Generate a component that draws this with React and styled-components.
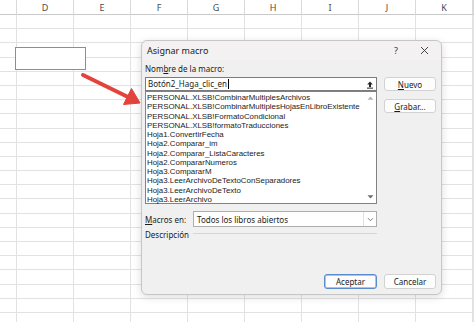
import React from 'react';
import styled, { createGlobalStyle } from 'styled-components';

const Global = createGlobalStyle`
  html, body { margin: 0; padding: 0; background: #ffffff; }
  body { font-family: "Noto Sans", "Liberation Sans", sans-serif; }
  #root { width: 474px; height: 322px; overflow: hidden; position: relative; }
`;

const Sheet = styled.div`
  display: grid;
  grid-template-columns: 17px repeat(8, 57px) 1fr;
  grid-template-rows: 15px repeat(22, 14.2px);
  width: 474px;
  height: 322px;
  background: #ffffff;
`;

const HeaderCell = styled.div`
  box-sizing: border-box;
  border-right: 1px solid #dadada;
  border-bottom: 1px solid #c9c9c9;
  display: flex;
  align-items: center;
  justify-content: center;
  font-size: 9px;
  color: #4a4a4a;
`;

const Cell = styled.div`
  box-sizing: border-box;
  border-right: 1px solid #e2e2e2;
  border-bottom: 1px solid #e2e2e2;
`;

const Shape = styled.div`
  position: absolute;
  left: 15px;
  top: 47px;
  width: 71px;
  height: 23px;
  box-sizing: border-box;
  border: 1px solid #8e8e8e;
  background: #ffffff;
`;

const ArrowSvg = styled.svg`
  position: absolute;
  left: 78px;
  top: 68px;
  overflow: visible;
`;

const Dialog = styled.div`
  position: absolute;
  left: 141px;
  top: 40px;
  width: 301px;
  height: 255px;
  box-sizing: border-box;
  background: #f0f0f0;
  border: 1px solid #c6c6c6;
  border-radius: 6px;
  box-shadow: 0 2px 8px rgba(0, 0, 0, 0.14);
  display: flex;
  flex-direction: column;
  font-family: "Noto Sans", "Liberation Sans", sans-serif;
  font-size: 8px;
  color: #1b1b1b;
`;

const TitleBar = styled.div`
  height: 19px;
  display: flex;
  align-items: center;
  padding-left: 5px;
  background: #f3f1f1;
  border-radius: 6px 6px 0 0;
`;

const Title = styled.div`
  flex: 1;
  font-size: 9px;
  color: #1b1b1b;
`;

const TitleButton = styled.div`
  width: ${p => p.$w}px;
  display: flex;
  align-items: center;
  justify-content: center;
  font-size: 9px;
  color: #333;
`;

const Body = styled.div`
  flex: 1;
  display: flex;
  flex-direction: column;
  padding: 3px 5px 5px 3px;
`;

const Main = styled.div`
  display: flex;
  gap: 7px;
`;

const LeftCol = styled.div`
  width: 232px;
  display: flex;
  flex-direction: column;
`;

const RightCol = styled.div`
  width: 52px;
  display: flex;
  flex-direction: column;
  gap: 8px;
  padding-top: 14px;
`;

const Label = styled.div`
  height: 11px;
  line-height: 11px;
  white-space: nowrap;
`;

const U = styled.span`
  text-decoration: underline;
  text-underline-offset: 1px;
`;

const InputBox = styled.div`
  margin-top: 3px;
  height: 14px;
  box-sizing: border-box;
  border: 1px solid #7b7b7b;
  background: #ffffff;
  display: flex;
  align-items: center;
  padding-left: 2px;
`;

const InputText = styled.div`
  flex: 1;
  display: flex;
  align-items: center;
  line-height: 12px;
`;

const Caret = styled.span`
  display: inline-block;
  width: 1px;
  height: 10px;
  background: #000;
  margin-left: 1px;
`;

const UploadBtn = styled.div`
  width: 12px;
  height: 12px;
  display: flex;
  align-items: center;
  justify-content: center;
`;

const ListBox = styled.div`
  height: 113px;
  box-sizing: border-box;
  border: 1px solid #828282;
  background: #ffffff;
  display: flex;
`;

const ListItems = styled.div`
  flex: 1;
  padding: 1px 0 0 1px;
  font-family: "Liberation Sans", "Noto Sans", sans-serif;
  font-size: 7.9px;
`;

const ListItem = styled.div`
  height: 9.25px;
  line-height: 9.25px;
  white-space: nowrap;
`;

const ScrollBar = styled.div`
  width: 11px;
  display: flex;
  flex-direction: column;
  justify-content: space-between;
  align-items: center;
  padding: 4px 0 4px;
`;

const MacrosRow = styled.div`
  margin-top: 7px;
  display: flex;
  align-items: center;
  height: 16px;
`;

const MacrosLabel = styled.div`
  width: 48px;
  white-space: nowrap;
`;

const Select = styled.div`
  flex: 1;
  height: 16px;
  box-sizing: border-box;
  border: 1px solid #adadad;
  background: #ffffff;
  display: flex;
  align-items: center;
  padding-left: 3px;
`;

const SelectText = styled.div`
  flex: 1;
`;

const SelectChevron = styled.div`
  width: 12px;
  height: 14px;
  border-left: 1px solid #e0e0e0;
  display: flex;
  align-items: center;
  justify-content: center;
`;

const DescRow = styled.div`
  margin-top: 2px;
  display: flex;
  align-items: center;
  gap: 4px;
  height: 11px;
`;

const DescLine = styled.div`
  flex: 1;
  height: 1px;
  background: #d6d6d6;
  margin-top: -2px;
`;

const Spacer = styled.div`
  flex: 1;
`;

const Footer = styled.div`
  display: flex;
  justify-content: flex-end;
  gap: 7px;
`;

const Button = styled.div`
  width: ${p => p.$w || 52}px;
  height: ${p => p.$h || 15}px;
  box-sizing: border-box;
  border: 1px solid ${p => (p.$default ? '#5a8ccb' : '#d2d2d2')};
  box-shadow: ${p => (p.$default ? 'inset 0 0 0 0.5px #5a8ccb' : 'none')};
  border-radius: 3px;
  background: #fdfdfd;
  display: flex;
  align-items: center;
  justify-content: center;
  font-size: 8px;
  color: #1b1b1b;
`;

const columns = ['', 'D', 'E', 'F', 'G', 'H', 'I', 'J', 'K', ''];

const items = [
  'PERSONAL.XLSB!CombinarMultiplesArchivos',
  'PERSONAL.XLSB!CombinarMultiplesHojasEnLibroExistente',
  'PERSONAL.XLSB!FormatoCondicional',
  'PERSONAL.XLSB!formatoTraducciones',
  'Hoja1.ConvertirFecha',
  'Hoja2.Comparar_im',
  'Hoja2.Comparar_ListaCaracteres',
  'Hoja2.CompararNumeros',
  'Hoja3.CompararM',
  'Hoja3.LeerArchivoDeTextoConSeparadores',
  'Hoja3.LeerArchivoDeTexto',
  'Hoja3.LeerArchivo',
];

export default function App() {
  const cells = [];
  for (let r = 0; r < 22; r++) {
    for (let c = 0; c < columns.length; c++) {
      cells.push(<Cell key={`${r}-${c}`} />);
    }
  }
  return (
    <>
      <Global />
      <Sheet>
        {columns.map((c, i) => (
          <HeaderCell key={i}>{c}</HeaderCell>
        ))}
        {cells}
      </Sheet>
      <Shape />
      <ArrowSvg width="66" height="40" viewBox="0 0 66 40">
        <line x1="5" y1="7" x2="50" y2="29" stroke="#e4433b" strokeWidth="4" strokeLinecap="round" />
        <polygon points="62,35 45.5,36.5 53.5,20.5" fill="#e4433b" stroke="#e4433b" strokeWidth="1" strokeLinejoin="round" />
      </ArrowSvg>
      <Dialog>
        <TitleBar>
          <Title>Asignar macro</Title>
          <TitleButton $w={22}>?</TitleButton>
          <TitleButton $w={34}>
            <svg width="9" height="9" viewBox="0 0 9 9">
              <path d="M1 1L8 8M8 1L1 8" stroke="#333" strokeWidth="0.9" />
            </svg>
          </TitleButton>
        </TitleBar>
        <Body>
          <Main>
            <LeftCol>
              <Label>
                Nom<U>b</U>re de la macro:
              </Label>
              <InputBox>
                <InputText>
                  Botón2_Haga_clic_en
                  <Caret />
                </InputText>
                <UploadBtn>
                  <svg width="8" height="9" viewBox="0 0 8 9">
                    <path d="M4 1.5L1.2 4.5H3V7H5V4.5H6.8Z" fill="#222" />
                    <rect x="1" y="7.6" width="6" height="1" fill="#222" />
                  </svg>
                </UploadBtn>
              </InputBox>
              <ListBox>
                <ListItems>
                  {items.map(t => (
                    <ListItem key={t}>{t}</ListItem>
                  ))}
                </ListItems>
                <ScrollBar>
                  <svg width="7" height="4" viewBox="0 0 7 4">
                    <path d="M0.5 3.8L3.5 0.5L6.5 3.8Z" fill="#b4b4b4" />
                  </svg>
                  <svg width="7" height="4" viewBox="0 0 7 4">
                    <path d="M0.5 0.2L3.5 3.5L6.5 0.2Z" fill="#6c6c6c" />
                  </svg>
                </ScrollBar>
              </ListBox>
              <MacrosRow>
                <MacrosLabel>
                  <U>M</U>acros en:
                </MacrosLabel>
                <Select>
                  <SelectText>Todos los libros abiertos</SelectText>
                  <SelectChevron>
                    <svg width="7" height="5" viewBox="0 0 7 5">
                      <path d="M1 1.2L3.5 3.7L6 1.2" fill="none" stroke="#555" strokeWidth="0.8" />
                    </svg>
                  </SelectChevron>
                </Select>
              </MacrosRow>
              <DescRow>
                Descripción
                <DescLine />
              </DescRow>
            </LeftCol>
            <RightCol>
              <Button $w={52} $h={14}>
                <U>N</U>uevo
              </Button>
              <Button $w={52} $h={14}>
                <U>G</U>rabar...
              </Button>
            </RightCol>
          </Main>
          <Spacer />
          <Footer>
            <Button $w={53} $default>Aceptar</Button>
            <Button $w={52}>Cancelar</Button>
          </Footer>
        </Body>
      </Dialog>
    </>
  );
}
